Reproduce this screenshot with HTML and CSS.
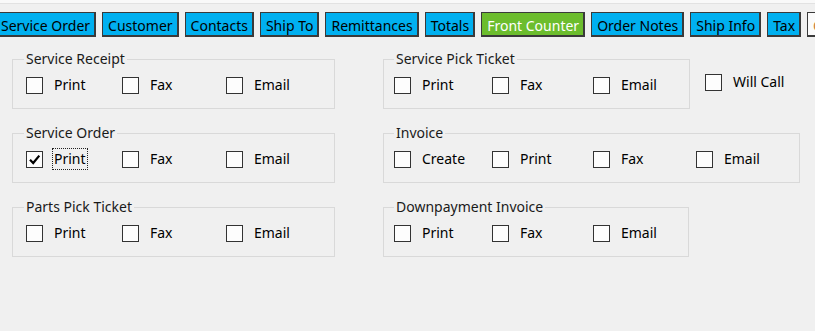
FILE: index.html
```html
<!DOCTYPE html>
<html>
<head>
<meta charset="utf-8">
<link rel="stylesheet" href="styles.css">
</head>
<body>
<div class="topline"></div>
<div class="tabs">
  <div class="tab">Service Order</div>
  <div class="tab">Customer</div>
  <div class="tab">Contacts</div>
  <div class="tab">Ship To</div>
  <div class="tab">Remittances</div>
  <div class="tab">Totals</div>
  <div class="tab active">Front Counter</div>
  <div class="tab">Order Notes</div>
  <div class="tab">Ship Info</div>
  <div class="tab">Tax</div>
  <div class="tab other">O</div>
</div>
<div class="content">
  <fieldset class="group">
    <legend>Service Receipt</legend>
    <div class="row cols-l">
      <label class="cb"><span class="box"></span><span class="txt">Print</span></label>
      <label class="cb"><span class="box"></span><span class="txt">Fax</span></label>
      <label class="cb"><span class="box"></span><span class="txt">Email</span></label>
    </div>
  </fieldset>
  <div class="rightrow">
    <fieldset class="group right w307">
      <legend>Service Pick Ticket</legend>
      <div class="row cols-r">
        <label class="cb"><span class="box"></span><span class="txt">Print</span></label>
        <label class="cb"><span class="box"></span><span class="txt">Fax</span></label>
        <label class="cb"><span class="box"></span><span class="txt">Email</span></label>
      </div>
    </fieldset>
    <label class="cb willcall"><span class="box"></span><span class="txt">Will Call</span></label>
  </div>

  <fieldset class="group">
    <legend>Service Order</legend>
    <div class="row cols-l">
      <label class="cb"><span class="box"><svg viewBox="0 0 13 13" width="13" height="13"><path d="M2 6.8 L5.2 10 L11.3 2.6" fill="none" stroke="#000" stroke-width="2.2"/></svg></span><span class="txt focus">Print</span></label>
      <label class="cb"><span class="box"></span><span class="txt">Fax</span></label>
      <label class="cb"><span class="box"></span><span class="txt">Email</span></label>
    </div>
  </fieldset>
  <div class="rightrow">
    <fieldset class="group right w417">
      <legend>Invoice</legend>
      <div class="row cols-r">
        <label class="cb"><span class="box"></span><span class="txt">Create</span></label>
        <label class="cb"><span class="box"></span><span class="txt">Print</span></label>
        <label class="cb"><span class="box"></span><span class="txt">Fax</span></label>
        <label class="cb"><span class="box"></span><span class="txt">Email</span></label>
      </div>
    </fieldset>
  </div>

  <fieldset class="group">
    <legend>Parts Pick Ticket</legend>
    <div class="row cols-l">
      <label class="cb"><span class="box"></span><span class="txt">Print</span></label>
      <label class="cb"><span class="box"></span><span class="txt">Fax</span></label>
      <label class="cb"><span class="box"></span><span class="txt">Email</span></label>
    </div>
  </fieldset>
  <div class="rightrow">
    <fieldset class="group right w306">
      <legend>Downpayment Invoice</legend>
      <div class="row cols-r">
        <label class="cb"><span class="box"></span><span class="txt">Print</span></label>
        <label class="cb"><span class="box"></span><span class="txt">Fax</span></label>
        <label class="cb"><span class="box"></span><span class="txt">Email</span></label>
      </div>
    </fieldset>
  </div>
</div>
</body>
</html>
```

FILE: styles.css
```css
html, body {
  margin: 0;
  padding: 0;
  background: #f0f0f0;
  font-family: "Noto Sans", "Open Sans", sans-serif;
  font-size: 14px;
  color: #000;
  width: 815px;
  height: 331px;
  overflow: hidden;
}

.topline {
  height: 3px;
  background: #f9f9f9;
  border-bottom: 1px solid #e2e2e2;
}

.tabs {
  display: flex;
  gap: 6px;
  margin-top: 8px;
  margin-left: -5px;
  white-space: nowrap;
  overflow: hidden;
}

.tab {
  flex: none;
  background: #00b0f0;
  color: #000;
  border: 1px solid #3a3a3a;
  border-right-width: 2px;
  border-bottom-width: 2px;
  padding: 3px 4px 0 5px;
  height: 19px;
  line-height: 20px;
}

.tab.active {
  background: #6cbd2d;
  color: #fff;
}

.tab.other {
  background: #fbfbfb;
  color: #c87a3a;
}

.content {
  display: grid;
  grid-template-columns: 323px 1fr;
  column-gap: 48px;
  row-gap: 16px;
  padding: 14px 0 0 12px;
}

.group {
  margin: 0;
  border: 1px solid #d9d9d9;
  padding: 9px 10px 14px 13px;
  min-width: 0;
}

.group legend {
  padding: 0 2px;
  margin-left: -2px;
  line-height: 16px;
  height: 16px;
  color: #1a1a1a;
}

.group.right {
  padding-left: 10px;
}

.group.right legend {
  margin-left: 0;
}

.rightrow {
  display: flex;
  align-items: flex-start;
}

.w307 { width: 307px; box-sizing: border-box; }
.w417 { width: 417px; box-sizing: border-box; }
.w306 { width: 306px; box-sizing: border-box; }

.row {
  display: grid;
  height: 18px;
  align-items: center;
}

.cols-l { grid-template-columns: 96px 104px auto; }
.cols-r { grid-template-columns: 98px 101px 103px auto; }

.cb {
  display: flex;
  align-items: center;
  height: 18px;
  line-height: 18px;
}

.box {
  flex: none;
  width: 15px;
  height: 15px;
  border: 1px solid #333;
  background: #fdfdfd;
  margin-right: 11px;
  display: flex;
  align-items: center;
  justify-content: center;
}

.box svg { display: block; }

.txt.focus {
  outline: 1px dotted #222;
  outline-offset: 1px;
}

.willcall {
  margin-left: 15px;
  margin-top: 22px;
}
```
